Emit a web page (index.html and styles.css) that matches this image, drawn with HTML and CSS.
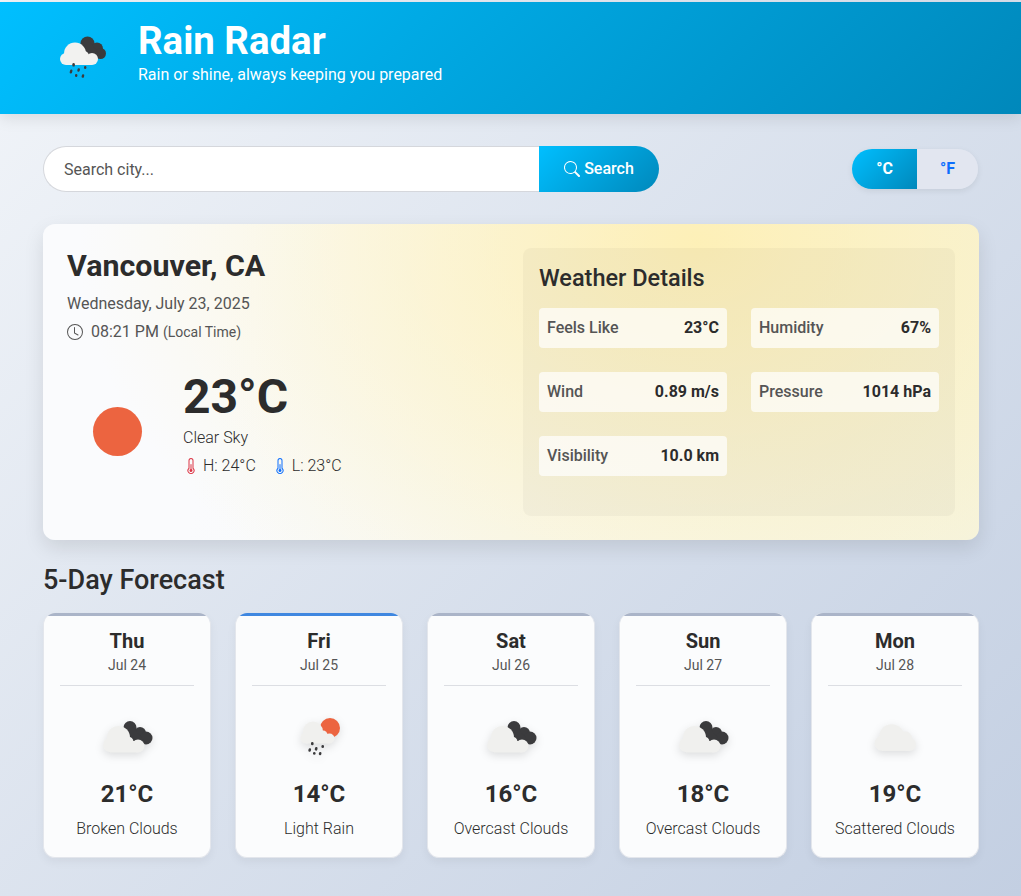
FILE: index.html
```html
<!DOCTYPE html>
<html lang="en">
<head>
    <meta charset="UTF-8">
    <meta name="viewport" content="width=device-width, initial-scale=1">
    <title>Rain Radar</title>
    <link rel="stylesheet" href="styles.css">
</head>
<body>

<!-- weather icons, 80x80 box -->
<svg class="icon-defs" aria-hidden="true">
    <symbol id="icon-rain-cloud" viewBox="0 0 80 80">
        <g fill="#3b3b3d">
            <circle cx="47.5" cy="25.5" r="7"/><circle cx="57" cy="30.5" r="6"/><circle cx="60.5" cy="35.5" r="5.5"/>
            <path d="M42 24h8l12 16H44z"/>
        </g>
        <g fill="#f2f2f0">
            <circle cx="35" cy="35.5" r="11"/><circle cx="26" cy="41" r="6"/><circle cx="44" cy="38" r="5"/><circle cx="52" cy="41" r="6"/>
            <rect x="26" y="38" width="26" height="9"/>
        </g>
        <g fill="#3b3b3d">
            <rect x="32.4" y="45" width="2.4" height="3.6" rx="1.2"/><rect x="30" y="51.5" width="2.4" height="4" rx="1.2" transform="rotate(15 31 53)"/>
            <rect x="37.4" y="50" width="2.4" height="3.6" rx="1.2" transform="rotate(15 38 52)"/><rect x="44" y="48" width="2.4" height="3" rx="1.2"/>
            <rect x="35" y="56" width="2.4" height="3" rx="1.2"/><rect x="41.7" y="56" width="2.4" height="3.6" rx="1.2" transform="rotate(15 42 58)"/>
        </g>
    </symbol>
    <symbol id="icon-clouds" viewBox="0 0 80 80">
        <g fill="#3b3b3d">
            <circle cx="43" cy="29.5" r="6.5"/><circle cx="53" cy="35" r="6"/><circle cx="59" cy="40" r="6.5"/>
            <path d="M38 28h7l15 18H42z"/>
        </g>
        <g fill="#f0f0ee">
            <circle cx="31.5" cy="39.5" r="11.5"/><circle cx="23" cy="47" r="7"/><circle cx="41" cy="44" r="5.5"/><circle cx="51" cy="48" r="6.5"/>
            <rect x="23" y="43" width="28" height="11.5"/>
        </g>
    </symbol>
    <symbol id="icon-scattered" viewBox="0 0 80 80">
        <g fill="#f0f0ee">
            <circle cx="36.7" cy="38.7" r="12.5"/><circle cx="50" cy="40.3" r="7"/><circle cx="54.5" cy="46.3" r="6.5"/><circle cx="27" cy="45.3" r="7.5"/>
            <rect x="27" y="42" width="27.5" height="10.8"/>
        </g>
    </symbol>
    <symbol id="icon-sun-rain" viewBox="0 0 80 80">
        <circle cx="51" cy="30" r="10" fill="#ec6440"/>
        <g fill="#f0f0ee">
            <circle cx="34" cy="33.5" r="10"/><circle cx="27" cy="40" r="5.5"/><circle cx="44" cy="37" r="4.5"/><circle cx="50.5" cy="40.5" r="5"/>
            <rect x="27" y="36" width="24" height="9.5"/>
        </g>
        <g fill="#3b3b3d">
            <rect x="32" y="44" width="2.6" height="3.2" rx="1.3"/><rect x="29.4" y="50" width="2.6" height="3.6" rx="1.3" transform="rotate(15 30 52)"/>
            <rect x="35.8" y="49" width="2.6" height="3.6" rx="1.3" transform="rotate(15 37 51)"/><rect x="42.4" y="47" width="2.6" height="3" rx="1.3"/>
            <rect x="34" y="54" width="2.6" height="2.8" rx="1.3"/><rect x="40" y="54" width="2.6" height="3.2" rx="1.3" transform="rotate(15 41 55)"/>
        </g>
    </symbol>
</svg>

<header class="app-header">
    <svg class="header-icon"><use href="#icon-rain-cloud"/></svg>
    <div>
        <h1>Rain Radar</h1>
        <p class="tagline">Rain or shine, always keeping you prepared</p>
    </div>
</header>

<main class="container">
    <div class="toolbar">
        <form class="search-form">
            <input class="search-input" type="text" placeholder="Search city...">
            <button class="search-btn" type="button">
                <svg class="bi" viewBox="0 0 16 16" fill="currentColor"><path d="M11.742 10.344a6.5 6.5 0 1 0-1.397 1.398h-.001q.044.06.098.115l3.85 3.85a1 1 0 0 0 1.415-1.414l-3.85-3.85a1 1 0 0 0-.115-.1zM12 6.5a5.5 5.5 0 1 1-11 0 5.5 5.5 0 0 1 11 0"/></svg>
                Search
            </button>
        </form>
        <div class="unit-toggle">
            <button class="unit-btn active" type="button">°C</button>
            <button class="unit-btn" type="button">°F</button>
        </div>
    </div>

    <section class="current-card">
        <div class="current-main">
            <h2 class="city">Vancouver, CA</h2>
            <p class="date">Wednesday, July 23, 2025</p>
            <p class="time">
                <svg class="bi clock" viewBox="0 0 16 16" fill="currentColor"><path d="M8 3.5a.5.5 0 0 0-1 0V9a.5.5 0 0 0 .252.434l3.5 2a.5.5 0 0 0 .496-.868L8 8.71V3.5z"/><path d="M8 16A8 8 0 1 0 8 0a8 8 0 0 0 0 16m7-8A7 7 0 1 1 1 8a7 7 0 0 1 14 0"/></svg>
                08:21 PM <small>(Local Time)</small>
            </p>
            <div class="now">
                <div class="now-icon"><span class="sun"></span></div>
                <div>
                    <div class="now-temp">23°C</div>
                    <div class="now-desc">Clear Sky</div>
                    <div class="high-low">
                        <span><svg class="bi hot" viewBox="0 0 16 16" fill="currentColor"><path d="M9.5 12.5a1.5 1.5 0 1 1-2-1.415V6.5a.5.5 0 0 1 1 0v4.585a1.5 1.5 0 0 1 1 1.415"/><path d="M5.5 2.5a2.5 2.5 0 0 1 5 0v7.55a3.5 3.5 0 1 1-5 0zM8 1a1.5 1.5 0 0 0-1.5 1.5v7.987l-.167.15a2.5 2.5 0 1 0 3.333 0l-.166-.15V2.5A1.5 1.5 0 0 0 8 1"/></svg>H: 24°C</span>
                        <span><svg class="bi cold" viewBox="0 0 16 16" fill="currentColor"><path d="M9.5 12.5a1.5 1.5 0 1 1-2-1.415V6.5a.5.5 0 0 1 1 0v4.585a1.5 1.5 0 0 1 1 1.415"/><path d="M5.5 2.5a2.5 2.5 0 0 1 5 0v7.55a3.5 3.5 0 1 1-5 0zM8 1a1.5 1.5 0 0 0-1.5 1.5v7.987l-.167.15a2.5 2.5 0 1 0 3.333 0l-.166-.15V2.5A1.5 1.5 0 0 0 8 1"/></svg>L: 23°C</span>
                    </div>
                </div>
            </div>
        </div>
        <div class="details">
            <h3>Weather Details</h3>
            <div class="details-grid">
                <div class="detail-item"><span class="label">Feels Like</span><span class="value">23°C</span></div>
                <div class="detail-item"><span class="label">Humidity</span><span class="value">67%</span></div>
                <div class="detail-item"><span class="label">Wind</span><span class="value">0.89 m/s</span></div>
                <div class="detail-item"><span class="label">Pressure</span><span class="value">1014 hPa</span></div>
                <div class="detail-item"><span class="label">Visibility</span><span class="value">10.0 km</span></div>
            </div>
        </div>
    </section>

    <h2 class="forecast-title">5-Day Forecast</h2>
    <section class="forecast-row">
        <div class="day-card">
            <div class="day-name">Thu</div>
            <div class="day-date">Jul 24</div>
            <svg class="day-icon"><use href="#icon-clouds"/></svg>
            <div class="day-temp">21°C</div>
            <div class="day-desc">Broken Clouds</div>
        </div>
        <div class="day-card rain">
            <div class="day-name">Fri</div>
            <div class="day-date">Jul 25</div>
            <svg class="day-icon"><use href="#icon-sun-rain"/></svg>
            <div class="day-temp">14°C</div>
            <div class="day-desc">Light Rain</div>
        </div>
        <div class="day-card">
            <div class="day-name">Sat</div>
            <div class="day-date">Jul 26</div>
            <svg class="day-icon"><use href="#icon-clouds"/></svg>
            <div class="day-temp">16°C</div>
            <div class="day-desc">Overcast Clouds</div>
        </div>
        <div class="day-card">
            <div class="day-name">Sun</div>
            <div class="day-date">Jul 27</div>
            <svg class="day-icon"><use href="#icon-clouds"/></svg>
            <div class="day-temp">18°C</div>
            <div class="day-desc">Overcast Clouds</div>
        </div>
        <div class="day-card">
            <div class="day-name">Mon</div>
            <div class="day-date">Jul 28</div>
            <svg class="day-icon"><use href="#icon-scattered"/></svg>
            <div class="day-temp">19°C</div>
            <div class="day-desc">Scattered Clouds</div>
        </div>
    </section>
</main>

</body>
</html>
```

FILE: styles.css
```css
:root {
    --blue-gradient: linear-gradient(135deg, #00bfff, #0088bb);
    --text-color: #2c2c2c;
    --secondary-text-color: #555;
}
html {
    box-sizing: border-box;
}
*, *:before, *:after {
    box-sizing: inherit;
}
body {
    font-family: Roboto, "Liberation Sans", sans-serif;
    margin: 0;
    padding-top: 2px;
    min-height: 896px;
    background: linear-gradient(135deg, #f2f5f9 0%, #c3cfe2 100%);
    color: var(--text-color);
}
.icon-defs {
    display: none;
}
.bi {
    width: 1em;
    height: 1em;
    flex-shrink: 0;
}

/* header */
.app-header {
    display: flex;
    align-items: center;
    gap: 18px;
    height: 112px;
    padding: 0 40px;
    color: #fff;
    background: var(--blue-gradient);
    box-shadow: 0 4px 15px rgba(0, 0, 0, 0.1);
}
.header-icon {
    width: 80px;
    height: 80px;
}
.app-header h1 {
    margin: 0;
    font-size: 38.4px;
    line-height: 44px;
    font-weight: 700;
}
.tagline {
    margin: 0 0 10px;
    font-size: 16px;
    line-height: 24px;
}

.container {
    padding: 32px 42px 0 43px;
}

/* search + units */
.toolbar {
    display: flex;
    align-items: center;
    justify-content: space-between;
    margin-bottom: 32px;
}
.search-form {
    display: flex;
    width: 616px;
    height: 46px;
}
.search-input {
    flex: 1;
    min-width: 0;
    padding: 0 20px;
    font: 16px Roboto, sans-serif;
    color: var(--text-color);
    background: #fff;
    border: 1px solid #d5d7dc;
    border-right: 0;
    border-radius: 23px 0 0 23px;
    outline: none;
}
.search-input::placeholder {
    color: #555;
    opacity: 1;
}
.search-btn {
    display: flex;
    align-items: center;
    justify-content: center;
    gap: 4px;
    width: 120px;
    padding-bottom: 2px;
    font: 500 16px Roboto, sans-serif;
    color: #fff;
    background: var(--blue-gradient);
    border: 0;
    border-radius: 0 23px 23px 0;
}
.unit-toggle {
    display: flex;
    height: 40px;
    margin-right: 1px;
    border-radius: 20px;
    overflow: hidden;
    box-shadow: 0 2px 6px rgba(0, 0, 0, 0.08);
}
.unit-btn {
    width: 65px;
    padding-bottom: 2px;
    font: 700 16px Roboto, sans-serif;
    color: #0d6efd;
    background: #e2e6f0;
    border: 0;
}
.unit-btn + .unit-btn {
    width: 61px;
}
.unit-btn.active {
    color: #fff;
    background: var(--blue-gradient);
}

/* current weather */
.current-card {
    display: grid;
    grid-template-columns: 1fr 1fr;
    gap: 24px;
    padding: 24px;
    border-radius: 12px;
    background:
        radial-gradient(ellipse 620px 440px at 70% 6%, rgba(255, 238, 170, 0.8), rgba(255, 238, 170, 0.35) 55%, rgba(255, 238, 170, 0.1) 85%, rgba(255, 238, 170, 0) 100%),
        linear-gradient(100deg, #fafbfd 20%, #f5f4e2 100%);
    box-shadow: 0 8px 20px rgba(0, 0, 0, 0.1);
}
.city {
    margin: 0 0 8px;
    font-size: 30.4px;
    line-height: 36px;
    font-weight: 700;
}
.date, .time {
    margin: 0;
    font-size: 16px;
    line-height: 24px;
    color: var(--secondary-text-color);
}
.date {
    margin-bottom: 4px;
}
.time {
    display: flex;
    align-items: center;
    gap: 4px;
}
.time small {
    font-size: 14px;
}
.clock {
    margin-right: 4px;
}
.now {
    display: flex;
    align-items: flex-start;
    margin-top: 23px;
}
.now-icon {
    display: flex;
    align-items: center;
    justify-content: center;
    width: 100px;
    height: 100px;
    margin-right: 16px;
    margin-top: 14px;
}
.sun {
    width: 49px;
    height: 49px;
    border-radius: 50%;
    background: #ec6440;
}
.now-temp {
    font-size: 48px;
    line-height: 59px;
    font-weight: 700;
}
.now-desc {
    font-size: 16px;
    line-height: 24px;
    font-weight: 300;
}
.high-low {
    display: flex;
    gap: 16px;
    margin-top: 4px;
    font-size: 16px;
    line-height: 24px;
    font-weight: 300;
    color: var(--text-color);
}
.high-low span {
    display: flex;
    align-items: center;
    gap: 4px;
}
.hot {
    color: #dc3545;
}
.cold {
    color: #0d6efd;
}

.details {
    padding: 16px 16px 40px;
    border-radius: 8px;
    background: rgba(0, 0, 0, 0.03);
}
.details h3 {
    margin: 0 0 15px;
    font-size: 23.5px;
    line-height: 29px;
    font-weight: 500;
}
.details-grid {
    display: grid;
    grid-template-columns: 1fr 1fr;
    gap: 24px;
}
.detail-item {
    display: flex;
    align-items: center;
    justify-content: space-between;
    height: 40px;
    padding: 0 8px 2px;
    border-radius: 4px;
    background: rgba(255, 255, 255, 0.7);
    font-size: 16px;
}
.label {
    font-weight: 500;
    color: var(--secondary-text-color);
}
.value {
    font-weight: 700;
}

/* forecast */
.forecast-title {
    margin: 24px 0 16px;
    font-size: 27px;
    line-height: 33px;
    font-weight: 500;
}
.forecast-row {
    display: grid;
    grid-template-columns: repeat(5, 168px);
    gap: 24px;
}
.day-card {
    position: relative;
    display: flex;
    flex-direction: column;
    align-items: center;
    height: 245px;
    padding: 16px 16px 0;
    overflow: hidden;
    text-align: center;
    background: #fbfcfd;
    border: 1px solid #e3e6ec;
    border-top: 0;
    border-radius: 12px;
    box-shadow: 0 4px 10px rgba(0, 0, 0, 0.05);
}
/* colored strip along the top edge */
.day-card::before {
    content: "";
    position: absolute;
    top: 0;
    left: 0;
    right: 0;
    height: 3px;
    background: #aab4c8;
}
.day-card.rain::before {
    background: #3f87e0;
}
.day-name {
    font-size: 20px;
    line-height: 24px;
    font-weight: 700;
}
.day-date {
    width: 100%;
    margin-top: 2px;
    padding-bottom: 10px;
    font-size: 14px;
    line-height: 20px;
    color: var(--secondary-text-color);
    border-bottom: 1px solid #dcdee3;
}
.day-icon {
    width: 80px;
    height: 80px;
    margin-top: 12px;
    filter: drop-shadow(0 3px 4px rgba(0, 0, 0, 0.12));
}
.day-temp {
    margin-top: 2px;
    font-size: 24px;
    line-height: 28px;
    font-weight: 700;
}
.day-desc {
    margin-top: 9px;
    font-size: 16px;
    line-height: 24px;
    font-weight: 300;
    white-space: nowrap;
}
```
